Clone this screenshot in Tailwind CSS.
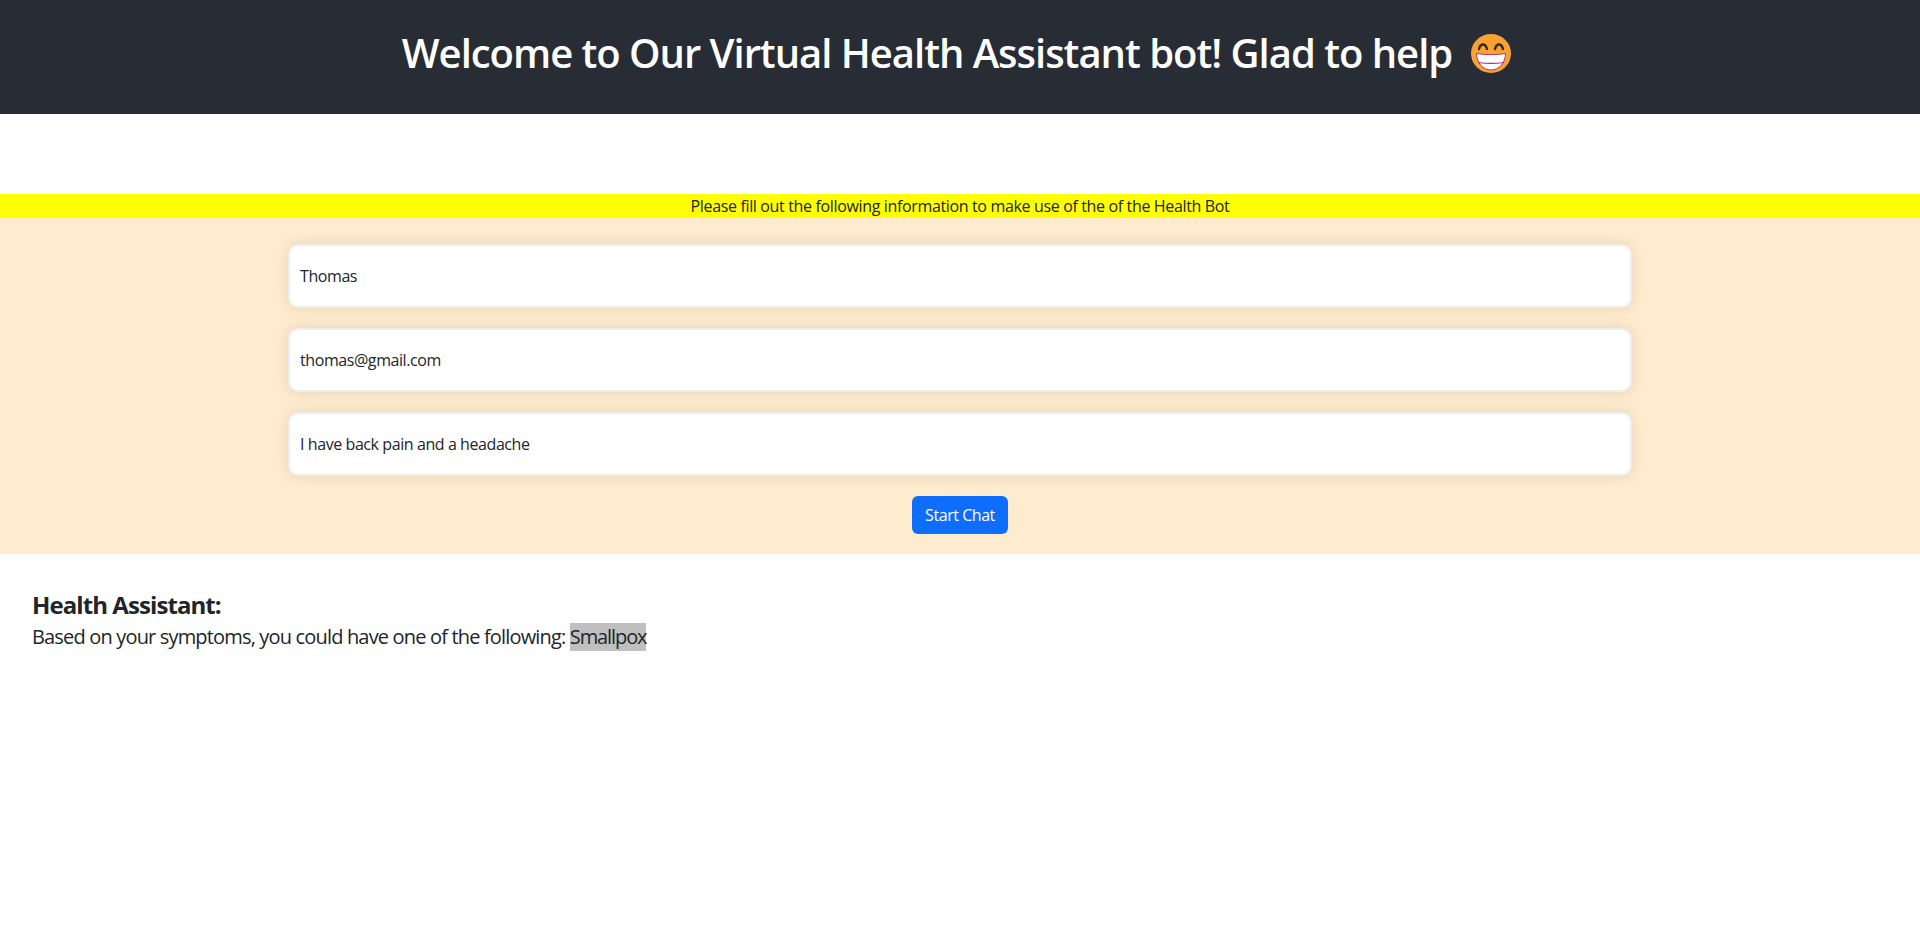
<!DOCTYPE html>
<html lang="en">

<head>
    <meta charset="UTF-8">
    <meta name="viewport" content="width=device-width, initial-scale=1.0">
    <title>Health Bot</title>
    <script src="https://cdn.jsdelivr.net/npm/@tailwindcss/browser@4"></script>
</head>

<body class="bg-white font-['Open_Sans',sans-serif] text-[#212529]">

    <!--header-->
    <div class="h-[114px] bg-[#282c34] text-white flex justify-center pt-[29px]">
        <h1 class="flex items-start pr-[7px] text-[40px] leading-[48px] font-semibold tracking-[-1.02px]">
            Welcome to Our Virtual Health Assistant bot! Glad to help
            <svg class="ml-[19px] mt-[5px] w-[40px] h-[39px]" viewBox="0 0 40 39">
                <ellipse cx="20" cy="19.5" rx="20" ry="19.5" fill="#f9a232" />
                <path d="M8 15 C9.5 9 14.5 9 16 15" fill="none" stroke="#3a2a20" stroke-width="2.4" stroke-linecap="round" />
                <path d="M24 15 C25.5 9 30.5 9 32 15" fill="none" stroke="#3a2a20" stroke-width="2.4" stroke-linecap="round" />
                <path d="M5.5 19.5 C14 21 26 21 34.5 19.5 C34.5 29 28 36 20 36 C12 36 5.5 29 5.5 19.5 Z" fill="#fff" stroke="#b32e7c" stroke-width="1" />
                <path d="M7 28.5 C14 29.5 26 29.5 33 28.5" fill="none" stroke="#b32e7c" stroke-width="1.2" />
            </svg>
        </h1>
    </div>

    <!--form-->
    <div class="mt-[80px]">
        <div class="h-[24px] bg-[#ffff00] text-center text-[16px] leading-[24px] tracking-[-0.35px]">
            Please fill out the following information to make use of the of the Health Bot
        </div>
        <div class="h-[336px] bg-[#ffebcd] flex flex-col items-center pt-[26px]">
            <input type="text" value="Thomas" class="w-[1344px] h-[64px] px-[10px] mb-[20px] bg-white border-2 border-[#eeeeee] rounded-[10px] text-[16px] tracking-[-0.42px] text-[#212529] shadow-[0_0_15px_rgba(0,0,0,0.1)]">
            <input type="text" value="thomas@gmail.com" class="w-[1344px] h-[64px] px-[10px] mb-[20px] bg-white border-2 border-[#eeeeee] rounded-[10px] text-[16px] tracking-[-0.42px] text-[#212529] shadow-[0_0_15px_rgba(0,0,0,0.1)]">
            <input type="text" value="I have back pain and a headache" class="w-[1344px] h-[64px] px-[10px] mb-[20px] bg-white border-2 border-[#eeeeee] rounded-[10px] text-[16px] tracking-[-0.42px] text-[#212529] shadow-[0_0_15px_rgba(0,0,0,0.1)]">
            <button class="w-[96px] h-[38px] bg-[#0d6efd] text-white rounded-[6px] text-[16px] tracking-[-0.45px]">Start Chat</button>
        </div>
    </div>

    <!--response-->
    <div class="px-[32px] pt-[36px]">
        <h3 class="text-[24px] leading-[29px] font-bold tracking-[-0.92px]">Health Assistant:</h3>
        <p class="text-[20px] leading-[30px] tracking-[-0.83px] mt-[3px]">Based on your symptoms, you could have one of the following: <span class="bg-[#c0c0c0] pb-px tracking-[-1.1px]">Smallpox</span></p>
    </div>

</body>

</html>
